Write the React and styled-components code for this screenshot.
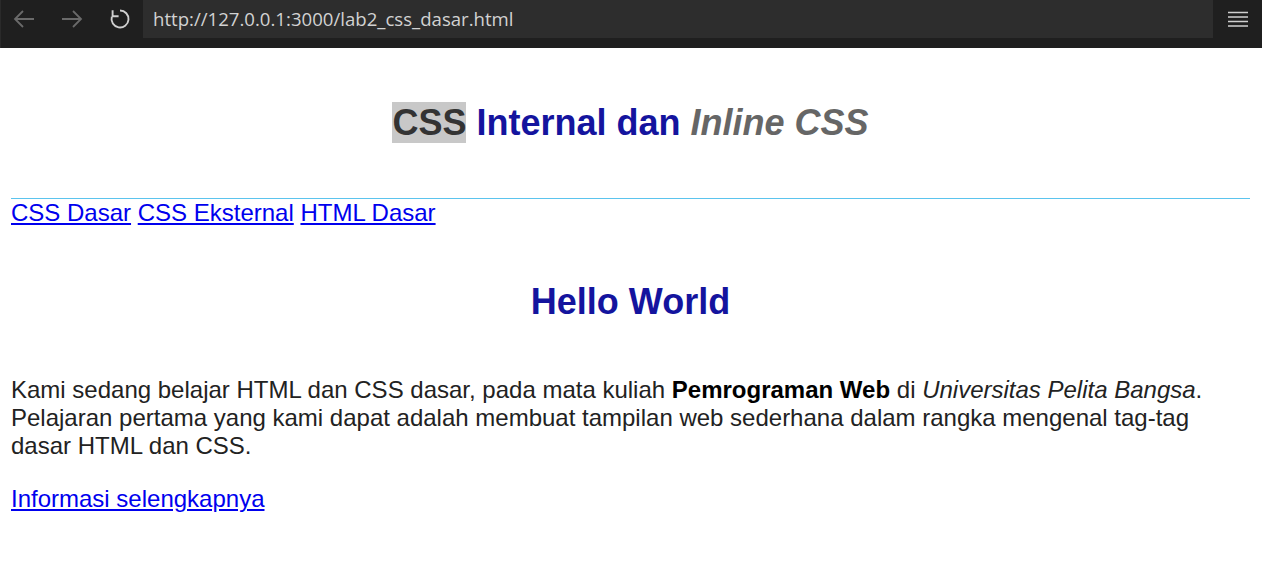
import styled, { createGlobalStyle } from 'styled-components'

const GlobalStyle = createGlobalStyle`
    html, body {
        margin:0;
        padding:0;
        background:#fff;
    }
    body {
        font-family:"Liberation Sans", Arial, sans-serif;
        font-size:24px;
        line-height:28px;
        color:#222;
    }
`

const Toolbar = styled.div`
    display:flex;
    height:48px;
    background:#1f1f1f;
    border-left:1px solid #2a2a2a;
    box-sizing:border-box;
`
const NavButton = styled.div`
    width:${p => p.w}px;
    height:38px;
    display:flex;
    align-items:center;
    justify-content:center;
`
const Address = styled.div`
    flex:1;
    height:38px;
    background:#2d2d2d;
    display:flex;
    align-items:center;
    padding-left:10px;
    font-family:"Open Sans", "Noto Sans", sans-serif;
    font-size:18.6px;
    color:#d2d2d2;
`
const Menu = styled.div`
    width:49px;
    height:38px;
    display:flex;
    align-items:center;
    justify-content:center;
`

const Page = styled.div`
    padding:0 12px 0 11px;
`
const Header = styled.header`
    padding:54px 0 55px;
    border-bottom:1px solid #5bc4ee;
    text-align:center;
`
const Title = styled.h1`
    margin:0;
    font-size:36px;
    line-height:41px;
    font-weight:bold;
`
const Mark = styled.span`
    background:#c8c8c8;
    color:#333;
`
const Accent = styled.span`
    color:#14149e;
`
const Soft = styled.em`
    color:#666;
`
const Nav = styled.nav`
    line-height:28px;
`
const Link = styled.a`
    color:#0000ee;
    text-decoration:underline;
`
const Heading = styled.h1`
    margin:54px 0 54px;
    font-size:36px;
    line-height:41px;
    text-align:center;
    color:#14149e;
`
const Para = styled.p`
    margin:0 0 25px;
`
const Strong = styled.b`
    color:#000;
`

const Arrow = ({ dir }) => (
    <svg width="22" height="18" viewBox="0 0 22 18">
        {dir === 'left'
            ? <path d="M2 9 H21 M10 1 L2 9 L10 17" fill="none" stroke="#6a6a6a" strokeWidth="1.8" />
            : <path d="M1 9 H20 M12 1 L20 9 L12 17" fill="none" stroke="#6a6a6a" strokeWidth="1.8" />}
    </svg>
)

const Reload = () => (
    <svg width="22" height="22" viewBox="0 0 22 22">
        <path d="M11 2.5 A8.5 8.5 0 1 1 2.8 8.8" fill="none" stroke="#d0d0d0" strokeWidth="1.9" />
        <path d="M3.6 2.2 V8.2 H9.6" fill="none" stroke="#d0d0d0" strokeWidth="1.9" />
    </svg>
)

const Burger = () => (
    <svg width="20" height="16" viewBox="0 0 20 16">
        <path d="M0 1.5 H20 M0 6 H20 M0 10.5 H20 M0 15 H20" stroke="#cfcfcf" strokeWidth="1.6" />
    </svg>
)

export default function App() {
    return (
        <>
            <GlobalStyle />
            <Toolbar>
                <NavButton w={46}><Arrow dir="left" /></NavButton>
                <NavButton w={49}><Arrow dir="right" /></NavButton>
                <NavButton w={47}><Reload /></NavButton>
                <Address>http://127.0.0.1:3000/lab2_css_dasar.html</Address>
                <Menu><Burger /></Menu>
            </Toolbar>
            <Page>
                <Header>
                    <Title>
                        <Mark>CSS</Mark> <Accent>Internal dan</Accent> <Soft>Inline CSS</Soft>
                    </Title>
                </Header>
                <Nav>
                    <Link href="#">CSS Dasar</Link> <Link href="#">CSS Eksternal</Link> <Link href="#">HTML Dasar</Link>
                </Nav>
                <main>
                    <Heading>Hello World</Heading>
                    <Para>
                        Kami sedang belajar HTML dan CSS dasar, pada mata kuliah <Strong>Pemrograman Web</Strong> di <em>Universitas Pelita Bangsa</em>.
                        Pelajaran pertama yang kami dapat adalah membuat tampilan web sederhana dalam rangka mengenal tag-tag dasar HTML dan CSS.
                    </Para>
                    <Para>
                        <Link href="#">Informasi selengkapnya</Link>
                    </Para>
                </main>
            </Page>
        </>
    )
}
